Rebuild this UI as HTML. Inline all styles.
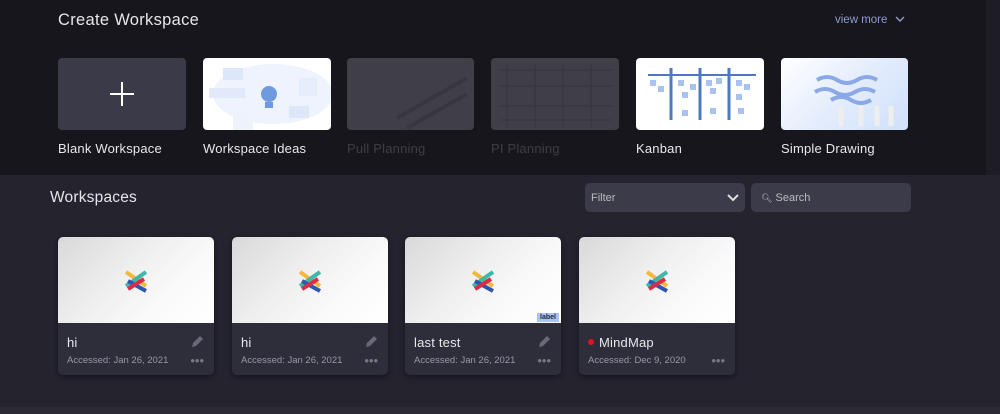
<!DOCTYPE html>
<html><head><style>
*{margin:0;padding:0;box-sizing:border-box}
body{width:1000px;height:414px;background:#24232e;font-family:"Liberation Sans",sans-serif;position:relative;overflow:hidden}
.top{position:absolute;left:0;top:0;width:986px;height:175px;background:#17161c}
.rs{position:absolute;left:986px;top:0;width:14px;height:175px;background:#1e1d25}
.abs{position:absolute}
.h1{left:58px;top:11px;color:#e6e6ea;font-size:16.5px;letter-spacing:.3px}
.vm{left:835px;top:14px;color:#8d9bd0;font-size:11.5px}
.t{position:absolute;top:58px;height:72px;border-radius:4px;overflow:hidden}
.tl{position:absolute;top:141px;font-size:13px;color:#e8e8ec;letter-spacing:.2px}
.ws{left:50px;top:189px;color:#e6e6ea;font-size:15.5px;letter-spacing:.2px}
.inp{position:absolute;top:183px;height:29px;background:#3c3b49;border-radius:5px;color:#bbb;font-size:11px;padding:9px 6px}
.card{position:absolute;top:237px;width:156px;height:138px;border-radius:5px;overflow:hidden;background:#2e2d3a;box-shadow:0 2px 6px rgba(0,0,0,.4)}
.img{height:86px;background:linear-gradient(135deg,#d9d9d9 0%,#eee 40%,#fafafa 70%,#fff 100%);position:relative}
.ct{position:absolute;left:9px;top:98px;color:#e8e8ec;font-size:13px;letter-spacing:.2px}
.cd{position:absolute;left:9px;top:118px;color:#9998a6;font-size:9.5px}
.dots{position:absolute;right:10px;top:120px;color:#77768a;font-size:13px;letter-spacing:0;line-height:8px}
.pen{position:absolute;right:10px;top:98px}
</style></head><body>
<div class="top"></div><div class="rs"></div>
<div class="abs h1">Create Workspace</div>
<div class="abs vm">view more <svg width="10" height="7" viewBox="0 0 10 7" style="margin-left:4px"><path d="M1 1l4 4 4-4" stroke="#8d9bd0" stroke-width="1.4" fill="none"/></svg></div>

<div class="t" style="left:58px;width:128px;background:#3b3a48"><svg width="128" height="72"><path d="M64 24v24M52 36h24" stroke="#fff" stroke-width="2"/></svg></div>
<div class="t" style="left:203px;width:128px;background:#fff"><svg width="128" height="72"><ellipse cx="70" cy="36" rx="60" ry="30" fill="#eef3fd"/><circle cx="66" cy="36" r="8" fill="#6e9ae0"/><rect x="62" y="44" width="8" height="6" fill="#6e9ae0"/><rect x="20" y="10" width="20" height="12" fill="#dde7fa"/><rect x="6" y="30" width="36" height="10" fill="#e1e9fb"/><rect x="96" y="20" width="18" height="18" fill="#e6edfb"/><rect x="86" y="48" width="20" height="12" fill="#dde7fa"/><rect x="30" y="56" width="20" height="16" fill="#eef2fb"/></svg></div>
<div class="t" style="left:347px;width:127px;background:#403f48"><svg width="127" height="72"><path d="M50 60l70-40M60 70l60-34" stroke="#38373f" stroke-width="4"/></svg></div>
<div class="t" style="left:491px;width:128px;background:#403f48"><svg width="128" height="72" stroke="#38373f" stroke-width="1.5" fill="none"><path d="M10 12h110M10 28h110M10 48h110M10 62h110M16 6v64M44 6v64M72 6v64M100 6v64"/></svg></div>
<div class="t" style="left:636px;width:128px;background:#fff"><svg width="128" height="72"><path d="M12 17h108" stroke="#4e78c0" stroke-width="2"/><path d="M35 10v52M64 10v52M93 10v52" stroke="#4e78c0" stroke-width="3"/><g fill="#a9c2ef"><rect x="14" y="22" width="6" height="6"/><rect x="22" y="28" width="6" height="6"/><rect x="42" y="22" width="6" height="6"/><rect x="54" y="26" width="6" height="6"/><rect x="46" y="34" width="6" height="6"/><rect x="70" y="22" width="6" height="6"/><rect x="80" y="20" width="6" height="6"/><rect x="74" y="30" width="6" height="6"/><rect x="100" y="22" width="6" height="6"/><rect x="108" y="26" width="6" height="6"/><rect x="100" y="36" width="6" height="6"/><rect x="46" y="52" width="6" height="6"/><rect x="74" y="50" width="6" height="6"/><rect x="102" y="50" width="6" height="6"/></g></svg></div>
<div class="t" style="left:781px;width:127px;background:linear-gradient(135deg,#fff 0%,#e4edfc 50%,#cfe0fb 100%)"><svg width="127" height="72" stroke="#8aa9e6" stroke-width="4" fill="none"><path d="M36 22q10-6 20 0t20 0 20 0M34 34q10-6 20 0t20 0 20 0M50 42q10-6 20 0t20 0"/><g stroke="#eee" stroke-width="5"><path d="M60 48v20M80 48v20M96 48v20M110 48v20"/></g></svg></div>

<div class="tl" style="left:58px">Blank Workspace</div>
<div class="tl" style="left:203px">Workspace Ideas</div>
<div class="tl" style="left:347px;color:#3e3d45">Pull Planning</div>
<div class="tl" style="left:491px;color:#3e3d45">PI Planning</div>
<div class="tl" style="left:636px">Kanban</div>
<div class="tl" style="left:781px">Simple Drawing</div>

<div class="abs ws">Workspaces</div>
<div class="inp" style="left:585px;width:160px">Filter<svg width="12" height="8" viewBox="0 0 12 8" style="position:absolute;right:6px;top:11px"><path d="M1 1l5 5 5-5" stroke="#ddd" stroke-width="2" fill="none"/></svg></div>
<div class="inp" style="left:751px;width:160px;padding-left:10px"><span style="font-size:9px">&#x1F50D;&#xFE0E;</span> Search</div>

<div class="card" style="left:58px"><div class="img"><svg class="abs" style="left:66px;top:32px" width="24" height="24"><path d="M2 3l20 14" stroke="#f2b93b" stroke-width="4"/><path d="M22 3L2 17" stroke="#3bb8a8" stroke-width="4"/><path d="M4 12l18 10" stroke="#2f56b0" stroke-width="4"/><path d="M20 10L4 20" stroke="#d92d4b" stroke-width="4"/></svg></div><div class="ct">hi</div><div class="cd">Accessed: Jan 26, 2021</div><div class="dots">•••</div><svg class="pen" width="14" height="14"><path d="M2 12l1-4 7-7 3 3-7 7z" fill="#6a6978"/></svg></div>
<div class="card" style="left:232px"><div class="img"><svg class="abs" style="left:66px;top:32px" width="24" height="24"><path d="M2 3l20 14" stroke="#f2b93b" stroke-width="4"/><path d="M22 3L2 17" stroke="#3bb8a8" stroke-width="4"/><path d="M4 12l18 10" stroke="#2f56b0" stroke-width="4"/><path d="M20 10L4 20" stroke="#d92d4b" stroke-width="4"/></svg></div><div class="ct">hi</div><div class="cd">Accessed: Jan 26, 2021</div><div class="dots">•••</div><svg class="pen" width="14" height="14"><path d="M2 12l1-4 7-7 3 3-7 7z" fill="#6a6978"/></svg></div>
<div class="card" style="left:405px"><div class="img"><svg class="abs" style="left:66px;top:32px" width="24" height="24"><path d="M2 3l20 14" stroke="#f2b93b" stroke-width="4"/><path d="M22 3L2 17" stroke="#3bb8a8" stroke-width="4"/><path d="M4 12l18 10" stroke="#2f56b0" stroke-width="4"/><path d="M20 10L4 20" stroke="#d92d4b" stroke-width="4"/></svg><div class="abs" style="right:2px;bottom:1px;background:#a9c3f2;color:#223;font-size:7px;padding:1px 3px;font-weight:bold">label</div></div><div class="ct">last test</div><div class="cd">Accessed: Jan 26, 2021</div><div class="dots">•••</div><svg class="pen" width="14" height="14"><path d="M2 12l1-4 7-7 3 3-7 7z" fill="#6a6978"/></svg></div>
<div class="card" style="left:579px"><div class="img"><svg class="abs" style="left:66px;top:32px" width="24" height="24"><path d="M2 3l20 14" stroke="#f2b93b" stroke-width="4"/><path d="M22 3L2 17" stroke="#3bb8a8" stroke-width="4"/><path d="M4 12l18 10" stroke="#2f56b0" stroke-width="4"/><path d="M20 10L4 20" stroke="#d92d4b" stroke-width="4"/></svg></div><div class="ct"><span style="display:inline-block;width:6px;height:6px;border-radius:50%;background:#e0141e;margin-right:5px;vertical-align:2px"></span>MindMap</div><div class="cd">Accessed: Dec 9, 2020</div><div class="dots">•••</div></div>

<div class="abs" style="left:0;top:407px;width:1000px;height:7px;background:#2c2b35"></div>
</body></html>
